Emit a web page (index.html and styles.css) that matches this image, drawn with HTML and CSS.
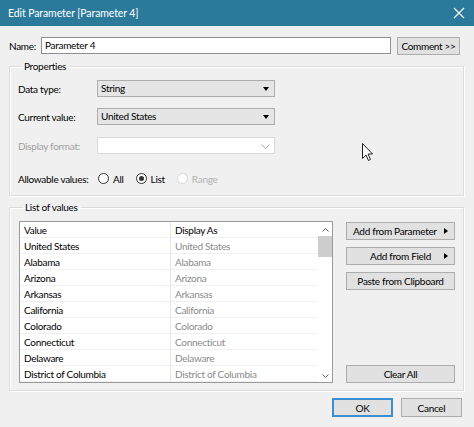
FILE: index.html
```html
<!DOCTYPE html>
<html lang="en">
<head>
    <meta charset="UTF-8">
    <title>Edit Parameter [Parameter 4]</title>
    <link rel="stylesheet" href="styles.css">
</head>
<body>

<div class="dialog">
    <div class="titlebar">
        <span class="title">Edit Parameter [Parameter 4]</span>
        <svg class="close" width="12" height="12" viewBox="0 0 12 12"><path d="M1 1L11 11M11 1L1 11" stroke="#fff" stroke-width="1.2"/></svg>
    </div>

    <div class="content">
        <!-- Name -->
        <div class="name-row">
            <label class="name-label">Name:</label>
            <div class="text-input">Parameter 4</div>
            <button class="btn comment-btn">Comment &gt;&gt;</button>
        </div>

        <!-- Properties -->
        <fieldset class="group props">
            <legend>Properties</legend>
            <div class="prop-row">
                <span class="prop-label">Data type:</span>
                <div class="combo">String<span class="caret"></span></div>
            </div>
            <div class="prop-row">
                <span class="prop-label">Current value:</span>
                <div class="combo">United States<span class="caret"></span></div>
            </div>
            <div class="prop-row disabled">
                <span class="prop-label">Display format:</span>
                <div class="combo combo-off">
                    <svg class="chev" width="9" height="5" viewBox="0 0 9 5"><path d="M0.5 0.5L4.5 4.5L8.5 0.5" fill="none" stroke="#aaa"/></svg>
                </div>
            </div>
            <div class="prop-row allow-row">
                <span class="allow-label">Allowable values:</span>
                <span class="radio"><span class="dot"></span>All</span>
                <span class="radio checked"><span class="dot"></span>List</span>
                <span class="radio off"><span class="dot"></span>Range</span>
            </div>
        </fieldset>

        <!-- List of values -->
        <fieldset class="group values">
            <legend>List of values</legend>
            <div class="values-body">
                <div class="listbox">
                    <div class="rows">
                        <div class="row"><span>Value</span><span class="hdr">Display As</span></div>
                        <div class="row"><span>United States</span><span>United States</span></div>
                        <div class="row"><span>Alabama</span><span>Alabama</span></div>
                        <div class="row"><span>Arizona</span><span>Arizona</span></div>
                        <div class="row"><span>Arkansas</span><span>Arkansas</span></div>
                        <div class="row"><span>California</span><span>California</span></div>
                        <div class="row"><span>Colorado</span><span>Colorado</span></div>
                        <div class="row"><span>Connecticut</span><span>Connecticut</span></div>
                        <div class="row"><span>Delaware</span><span>Delaware</span></div>
                        <div class="row"><span>District of Columbia</span><span>District of Columbia</span></div>
                    </div>
                    <div class="scrollbar">
                        <svg width="7" height="4" viewBox="0 0 7 4"><path d="M0.5 3.5L3.5 0.5L6.5 3.5" fill="none" stroke="#606060"/></svg>
                        <div class="thumb"></div>
                        <div class="track"></div>
                        <svg width="7" height="4" viewBox="0 0 7 4"><path d="M0.5 0.5L3.5 3.5L6.5 0.5" fill="none" stroke="#606060"/></svg>
                    </div>
                </div>
                <div class="side-buttons">
                    <button class="btn side-btn arrow-btn">Add from Parameter<span class="tri"></span></button>
                    <button class="btn side-btn arrow-btn center">Add from Field<span class="tri"></span></button>
                    <button class="btn side-btn">Paste from Clipboard</button>
                    <div class="spacer"></div>
                    <button class="btn side-btn last">Clear All</button>
                </div>
            </div>
        </fieldset>

        <div class="footer">
            <button class="btn foot-btn default">OK</button>
            <button class="btn foot-btn">Cancel</button>
        </div>
    </div>

    <!-- mouse pointer -->
    <svg class="pointer" width="12" height="19" viewBox="0 0 12 19">
        <path d="M0.5 0.5L0.5 15.5L4 12L6.5 17.5L8.5 16.5L6 11L10.5 11Z" fill="#fff" stroke="#222" stroke-width="1"/>
    </svg>
</div>

</body>
</html>
```

FILE: styles.css
```css
body {
    margin: 0;
    background-color: #f0f0f0;
    font-family: Lato, "Liberation Sans", sans-serif;
    font-size: 10px;
    letter-spacing: -0.3px;
    color: #000;
}
.dialog {
    position: relative;
    width: 474px;
    height: 427px;
    background-color: #f0f0f0;
    overflow: hidden;
    white-space: nowrap;
}
.titlebar {
    height: 26px;
    background-color: #2b7a9b;
    display: flex;
    align-items: center;
    justify-content: space-between;
    padding: 0 9px 0 8px;
}
.title {
    color: #fff;
    font-size: 10.5px;
    letter-spacing: -0.1px;
}
.content {
    padding: 11px 10px 0 9px;
}
.name-row {
    display: flex;
    align-items: center;
    height: 17px;
}
.name-label {
    width: 32px;
}
.text-input {
    width: 345px;
    height: 15px;
    line-height: 15px;
    border: 1px solid #8f8f8f;
    background-color: #fff;
    padding-left: 3px;
}
.btn {
    font-family: inherit;
    font-size: 10px;
    letter-spacing: -0.3px;
    color: #000;
    background-color: #e1e1e1;
    border: 1px solid #adadad;
    border-radius: 0;
    padding: 0;
    height: 18px;
    white-space: nowrap;
}
.comment-btn {
    margin-left: 6px;
    width: 63px;
}
.group {
    margin: 0;
    border: 1px solid #dcdcdc;
    box-shadow: inset 1px 1px 0 #fff, 1px 1px 0 #fff;
    box-sizing: border-box;
    min-width: 0;
}
.group legend {
    padding: 0 3px 0 2px;
    margin-left: 4px;
    line-height: 14px;
    height: 14px;
}
.props {
    margin-top: 5px;
    height: 137px;
    padding: 0 8px;
}
.prop-row {
    display: flex;
    align-items: center;
    height: 17px;
    margin-top: 7px;
}
.prop-row + .prop-row {
    margin-top: 11px;
}
.prop-label {
    width: 79px;
}
.disabled {
    margin-top: 12px !important;
}
.disabled .prop-label {
    color: #a0a0a0;
}
.combo {
    position: relative;
    width: 173px;
    height: 15px;
    line-height: 15px;
    padding-left: 3px;
    border: 1px solid #adadad;
    background-color: #e5e5e5;
}
.combo-off {
    background-color: #fff;
    border-color: #d9d9d9;
}
.caret {
    position: absolute;
    right: 5px;
    top: 6px;
    border-left: 3.5px solid transparent;
    border-right: 3.5px solid transparent;
    border-top: 4px solid #000;
}
.chev {
    position: absolute;
    right: 4px;
    top: 6px;
}
.allow-row {
    margin-top: 16px !important;
}
.allow-label {
    width: 80px;
}
.radio {
    display: inline-flex;
    align-items: center;
    margin-right: 12px;
}
.radio .dot {
    width: 11px;
    height: 11px;
    border: 1px solid #333;
    border-radius: 50%;
    background-color: #fff;
    margin-right: 4px;
    box-sizing: border-box;
    position: relative;
}
.radio.checked .dot::after {
    content: "";
    position: absolute;
    left: 2px;
    top: 2px;
    width: 5px;
    height: 5px;
    border-radius: 50%;
    background-color: #333;
}
.radio.off {
    color: #b0b0b0;
}
.radio.off .dot {
    border-color: #d8d8d8;
}
.values {
    margin-top: 4px;
    height: 191px;
    padding: 0 8px 0 9px;
}
.values-body {
    display: flex;
    margin-top: 7px;
}
.listbox {
    display: flex;
    width: 312px;
    height: 160px;
    border: 1px solid #9a9a9a;
    background-color: #fff;
}
.rows {
    flex: 1;
}
.row {
    display: grid;
    grid-template-columns: 150px 1fr;
    height: 16px;
    line-height: 16px;
    border-bottom: 1px solid #f0f0f0;
    box-sizing: border-box;
    overflow: hidden;
}
.row span {
    padding-left: 4px;
}
.row span + span {
    border-left: 1px solid #e6e6e6;
    color: #8a8a8a;
}
.row .hdr {
    color: #000;
}
.scrollbar {
    width: 14px;
    display: flex;
    flex-direction: column;
    align-items: center;
    padding: 6px 0 4px;
    box-sizing: border-box;
}
.thumb {
    width: 14px;
    height: 21px;
    margin-top: 4px;
    background-color: #cdcdcd;
}
.track {
    flex: 1;
}
.side-buttons {
    display: flex;
    flex-direction: column;
    margin-left: 13px;
    margin-top: 1px;
    width: 109px;
}
.side-btn {
    width: 109px;
    margin-bottom: 7px;
    position: relative;
}
.side-btn.last {
    margin-bottom: 0;
}
.arrow-btn {
    text-align: left;
    padding-left: 6px;
}
.arrow-btn.center {
    text-align: center;
    padding-left: 0;
}
.tri {
    position: absolute;
    right: 6px;
    top: 5px;
    border-top: 3.5px solid transparent;
    border-bottom: 3.5px solid transparent;
    border-left: 4px solid #000;
}
.spacer {
    flex: 1;
}
.footer {
    display: flex;
    justify-content: flex-end;
    margin-top: 7px;
    padding-right: 2px;
}
.foot-btn {
    width: 61px;
    height: 19px;
    margin-left: 8px;
}
.default {
    border: 2px solid #3b8fd0;
}
.pointer {
    position: absolute;
    left: 362px;
    top: 143px;
}
```
